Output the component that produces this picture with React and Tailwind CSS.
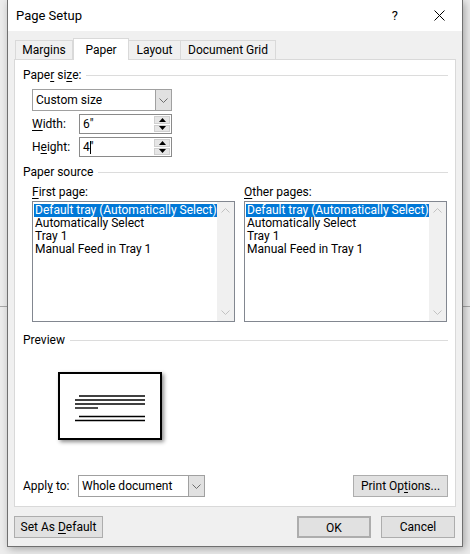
import React from 'react';

const trays = [
  'Default tray (Automatically Select)',
  'Automatically Select',
  'Tray 1',
  'Manual Feed in Tray 1',
];

// access-key letter, underlined like a Win32 label
function K({ children }) {
  return <span className="underline underline-offset-[2px] decoration-1">{children}</span>;
}

function Chevron({ up = false, color = '#6d6d6d' }) {
  return (
    <svg width="9" height="5" viewBox="0 0 9 5" className={up ? 'rotate-180' : ''}>
      <path d="M0.5 0.5 L4.5 4.5 L8.5 0.5" fill="none" stroke={color} strokeWidth="1" />
    </svg>
  );
}

function SectionHead({ children, className = '' }) {
  return (
    <div className={`flex items-center h-[14px] pl-[8px] pr-[7px] ${className}`}>
      <span className="leading-[14px]">{children}</span>
      <div className="flex-1 h-px bg-[#dcdcdc] ml-[5px]" />
    </div>
  );
}

function Combo({ value, className = '' }) {
  return (
    <div className={`flex h-[22px] border border-[#a0a0a0] bg-white ${className}`}>
      <div className="flex-1 pl-[3px] leading-[20px]">{value}</div>
      <div className="w-[16px] bg-[#e1e1e1] border-l border-[#a0a0a0] flex items-center justify-center">
        <Chevron />
      </div>
    </div>
  );
}

function SpinInput({ value, caret = false }) {
  return (
    <div className="flex h-[20px] w-[93px] border border-[#8a8a8a] bg-white">
      <div className="flex-1 pl-[3px] leading-[18px] flex items-center">
        <span>{value}</span>
        {caret && <span className="w-px h-[13px] bg-black" />}
        <span className={caret ? 'ml-[-1px]' : ''}>"</span>
      </div>
      <div className="w-[16px] my-px mr-px flex flex-col gap-px">
        <div className="flex-1 bg-[#e6e6e6] border border-[#cfcfcf] flex items-center justify-center">
          <svg width="7" height="4" viewBox="0 0 7 4"><path d="M3.5 0 L7 4 L0 4 Z" fill="#000" /></svg>
        </div>
        <div className="flex-1 bg-[#e6e6e6] border border-[#cfcfcf] flex items-center justify-center">
          <svg width="7" height="4" viewBox="0 0 7 4"><path d="M0 0 L7 0 L3.5 4 Z" fill="#000" /></svg>
        </div>
      </div>
    </div>
  );
}

function TrayList() {
  return (
    <div className="flex h-[121px] w-[203px] border border-[#828790] bg-white">
      <div className="flex-1 pt-[2px] pl-px">
        {trays.map((t, i) => (
          <div
            key={t}
            className={`h-[13px] leading-[13px] pl-px whitespace-nowrap ${
              i === 0 ? 'bg-[#0078d7] text-white' : ''
            }`}
          >
            {t}
          </div>
        ))}
      </div>
      <div className="w-[17px] bg-[#f0f0f0] flex flex-col items-center justify-between py-[6px]">
        <Chevron up color="#c2c2c2" />
        <Chevron color="#c2c2c2" />
      </div>
    </div>
  );
}

function Btn({ children, className = '' }) {
  return (
    <button className={`h-[22px] bg-[#e1e1e1] border border-[#adadad] leading-[20px] text-center ${className}`}>
      {children}
    </button>
  );
}

function PagePreview() {
  return (
    <div className="ml-[43px] mt-[25px] w-[104px] h-[68px] bg-white border-2 border-black shadow-[2px_2px_4px_rgba(0,0,0,0.45)]">
      <svg width="100" height="64" viewBox="0 0 100 64">
        <g stroke="#000" strokeWidth="1.4">
          <line x1="19" y1="22" x2="85" y2="22" />
          <line x1="15" y1="26" x2="85" y2="26" />
          <line x1="15" y1="30" x2="85" y2="30" />
          <line x1="15" y1="34" x2="38" y2="34" />
          <line x1="19" y1="42.5" x2="85" y2="42.5" />
          <line x1="15" y1="46.5" x2="85" y2="46.5" />
        </g>
      </svg>
    </div>
  );
}

const tabs = ['Margins', 'Paper', 'Layout', 'Document Grid'];
const tabWidths = ['w-[58px]', 'w-[56px]', 'w-[52px]', 'w-[95px]'];

export default function App() {
  return (
    <div className="relative w-[470px] h-[554px] overflow-hidden bg-[#ececec] text-[12px] text-black font-['Segoe_UI',Roboto,sans-serif]">
      {/* window behind the dialog */}
      <div className="absolute left-0 right-0 top-[306px] h-px bg-[#a8a8a8]" />

      <div className="relative ml-[7px] w-[456px] h-[547px] border border-t-0 border-[#707070] bg-[#f0f0f0] shadow-[2px_2px_8px_rgba(0,0,0,0.3)]">
        {/* title bar */}
        <div className="h-[31px] bg-white flex items-center pl-[8px]">
          <span className="text-[13px]">Page Setup</span>
          <span className="ml-auto mr-[36px] text-[13px]">?</span>
          <svg width="11" height="11" viewBox="0 0 11 11" className="mr-[17px]">
            <path d="M0.5 0.5 L10.5 10.5 M10.5 0.5 L0.5 10.5" stroke="#000" strokeWidth="1" />
          </svg>
        </div>

        {/* tabs */}
        <div className="flex items-end h-[28px] pl-[7px]">
          {tabs.map((t, i) =>
            i === 1 ? (
              <div
                key={t}
                className={`${tabWidths[i]} h-[22px] -mb-px relative z-10 bg-white border border-b-0 border-[#d9d9d9] flex items-center justify-center`}
              >
                {t}
              </div>
            ) : (
              <div
                key={t}
                className={`${tabWidths[i]} h-[19px] border border-b-0 border-[#d9d9d9] ${i > 1 ? 'border-l-0' : ''} flex items-center justify-center`}
              >
                {t}
              </div>
            )
          )}
        </div>

        {/* tab page */}
        <div className="mx-[6px] h-[448px] bg-white border border-[#d9d9d9] flex flex-col">
          <SectionHead className="mt-[8px]">
            Pape<K>r</K> si<K>z</K>e:
          </SectionHead>
          <div className="pl-[17px]">
            <Combo value="Custom size" className="mt-[7px] w-[140px]" />
            <div className="mt-[3px] flex items-center">
              <span className="w-[47px]">
                <K>W</K>idth:
              </span>
              <SpinInput value="6" />
            </div>
            <div className="mt-[3px] flex items-center">
              <span className="w-[47px]">
                H<K>e</K>ight:
              </span>
              <SpinInput value="4" caret />
            </div>
          </div>

          <SectionHead className="mt-[8px]">Paper source</SectionHead>
          <div className="pl-[17px] mt-[6px] flex gap-[9px]">
            <div>
              <div className="h-[14px] leading-[14px]">
                <K>F</K>irst page:
              </div>
              <div className="mt-[2px]">
                <TrayList />
              </div>
            </div>
            <div>
              <div className="h-[14px] leading-[14px]">
                <K>O</K>ther pages:
              </div>
              <div className="mt-[2px]">
                <TrayList />
              </div>
            </div>
          </div>

          <SectionHead className="mt-[11px]">Preview</SectionHead>
          <PagePreview />

          <div className="mt-auto mb-[9px] flex items-center pl-[8px] pr-[7px]">
            <span className="w-[55px]">
              Appl<K>y</K> to:
            </span>
            <Combo value="Whole document" className="w-[127px]" />
            <Btn className="ml-auto w-[95px]">
              Print Op<K>t</K>ions...
            </Btn>
          </div>
        </div>

        {/* dialog buttons */}
        <div className="mt-[9px] pl-[6px] pr-[7px] flex items-center">
          <Btn className="w-[89px]">
            Set As <K>D</K>efault
          </Btn>
          <Btn className="ml-auto w-[74px] border-2 border-[#0078d7] leading-[18px]">OK</Btn>
          <Btn className="ml-[10px] w-[74px]">Cancel</Btn>
        </div>
      </div>
    </div>
  );
}
